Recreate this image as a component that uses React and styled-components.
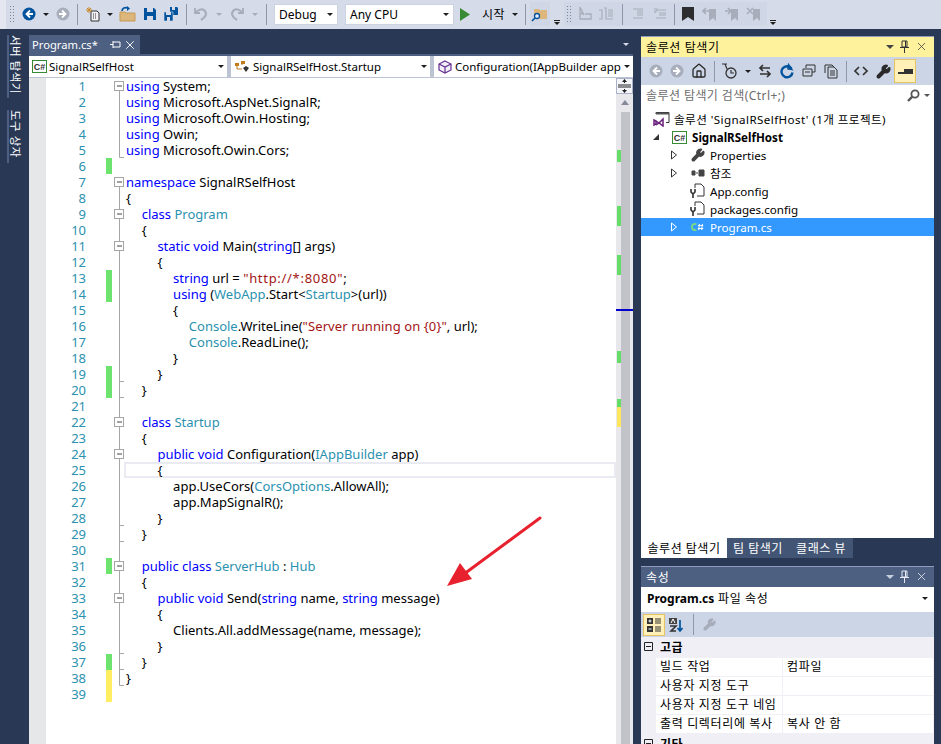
import React from 'react';
import styled, { createGlobalStyle } from 'styled-components';
import { Wrench, Home, X } from 'lucide-react';

const GlobalStyle = createGlobalStyle`
    html, body {
        margin: 0;
        padding: 0;
        background: #293955;
    }
    * {
        box-sizing: border-box;
    }
`;

const FONT = `"Noto Sans", "Noto Sans CJK KR", sans-serif`;

const Root = styled.div`
    width: 941px;
    height: 744px;
    overflow: hidden;
    position: relative;
    display: flex;
    flex-direction: column;
    background: #293955;
    font-family: ${FONT};
    font-size: 12px;
    color: #000;
`;

/* top toolbar */
const Toolbar = styled.div`
    height: 29px;
    flex: none;
    display: flex;
    align-items: center;
    padding: 0 0 1px 3px;
    background: #d6dbe9;
    border-left: 6px solid #e4e7f0;
`;

const Grip = styled.div`
    width: 5px;
    height: 19px;
    margin-left: ${p => p.$ml || 0}px;
    margin-right: ${p => p.$mr || 5}px;
    background-image: radial-gradient(#7d8699 0.6px, transparent 0.8px);
    background-size: 3px 3px;
`;

const Tool = styled.div`
    width: ${p => p.$w || 20}px;
    height: 22px;
    flex: none;
    display: flex;
    align-items: center;
    justify-content: center;
    color: ${p => p.$color || '#1e1e1e'};
`;

const Sep = styled.div`
    width: ${p => p.$w || 9}px;
    height: 21px;
    flex: none;
    display: flex;
    justify-content: center;

    &::before {
        content: '';
        width: 1px;
        background: #8f97a8;
    }
`;

const Spacer = styled.div`
    width: ${p => p.$w}px;
    flex: none;
`;

const Caret = styled.span`
    width: 0;
    height: 0;
    border-left: ${p => p.$size || 3}px solid transparent;
    border-right: ${p => p.$size || 3}px solid transparent;
    border-top: ${p => p.$size || 3}px solid ${p => p.$color || '#1e1e1e'};
`;

const ToolSelect = styled.div`
    width: ${p => p.$w}px;
    height: 21px;
    flex: none;
    margin-right: ${p => p.$mr || 0}px;
    display: flex;
    align-items: center;
    justify-content: space-between;
    padding: 0 4px;
    background: #fff;
    border: 1px solid #cdd3e0;
    font-size: 12px;
`;

const RunLabel = styled.span`
    width: 36px;
    flex: none;
    padding-left: 9px;
    font-size: 12px;
    letter-spacing: 0.4px;
`;

const ToolGroup = styled.div`
    display: flex;
    align-items: center;
    height: 24px;
    flex: none;
    background: #cfd6e5;
`;

const Overflow = styled.div`
    width: ${p => p.$w || 12}px;
    height: 24px;
    flex: none;
    display: flex;
    flex-direction: column;
    justify-content: flex-end;
    align-items: center;
    gap: 1px;
    padding-bottom: 1px;

    &::before {
        content: '';
        width: 6px;
        height: 1px;
        background: #1e1e1e;
    }

    &::after {
        content: '';
        border-left: 3px solid transparent;
        border-right: 3px solid transparent;
        border-top: 3px solid #1e1e1e;
    }
`;

const Main = styled.div`
    flex: 1;
    min-height: 0;
    display: flex;
`;

/* left vertical tabs */
const SideStrip = styled.div`
    width: 29px;
    flex: none;
    display: flex;
    flex-direction: column;
    align-items: flex-start;
    gap: 12px;
    padding: 6px 0 0 9px;
`;

const SideTab = styled.div`
    writing-mode: vertical-rl;
    text-orientation: sideways;
    width: 12px;
    height: ${p => p.$h}px;
    display: flex;
    align-items: center;
    color: #fff;
    font-size: 11.5px;
    line-height: 12px;
    letter-spacing: 0.5px;
    white-space: nowrap;
    box-shadow: -2px 0 0 #4d6082;
`;

/* document well */
const DocWell = styled.div`
    width: 604px;
    flex: none;
    display: flex;
    flex-direction: column;
`;

const DocTabs = styled.div`
    height: 27px;
    flex: none;
    padding-top: 6px;
    display: flex;
    justify-content: space-between;
    border-bottom: 2px solid #4d6082;
`;

const DocTab = styled.div`
    width: 111px;
    height: 19px;
    display: flex;
    align-items: center;
    padding-left: 3px;
    background: #4d6082;
    color: #fff;
    font-size: 11.2px;
`;

const DocTabName = styled.span`
    width: 76px;
    flex: none;
`;

const WellCaret = styled.div`
    padding: 8px 4px 0 0;
    display: flex;
`;

const NavBar = styled.div`
    height: 22px;
    flex: none;
    display: flex;
    gap: 4px;
    padding-bottom: 1px;
    background: #bcc4d4;
`;

const NavCombo = styled.div`
    width: ${p => p.$w}px;
    flex: ${p => (p.$grow ? 1 : 'none')};
    display: flex;
    align-items: center;
    gap: 2px;
    padding: 0 3px;
    background: #fff;
    font-size: 11.5px;
    white-space: nowrap;
    overflow: hidden;
`;

const NavText = styled.span`
    flex: 1;
    overflow: hidden;
`;

const Editor = styled.div`
    flex: 1;
    min-height: 0;
    display: flex;
    background: #fff;
`;

const Gutter = styled.div`
    width: 17px;
    flex: none;
    background: #e6e7e8;
`;

const Lines = styled.div`
    flex: 1;
    min-width: 0;
`;

const Row = styled.div`
    height: 16px;
    display: flex;
    font-size: 13px;
    line-height: 16px;
    white-space: pre;
`;

const LineNo = styled.div`
    width: 40px;
    flex: none;
    text-align: right;
    color: #2b91af;
`;

const ChangeBar = styled.div`
    width: 6px;
    flex: none;
    margin-left: 20px;
    background: ${p => ({ saved: '#6fe36f', dirty: '#ffee62' }[p.$state] || 'transparent')};
`;

const FoldCell = styled.svg`
    width: 12px;
    height: 16px;
    flex: none;
    display: block;
`;

const Code = styled.div`
    flex: 1;
    min-width: 0;
    padding-left: ${p => 2 + p.$indent * 15.7}px;
    box-shadow: ${p => (p.$current ? 'inset 0 0 0 2px #eaeaf2' : 'none')};
    color: #000;
`;

const Kw = styled.span`
    color: #0000ff;
`;

const TypeName = styled.span`
    color: #2b91af;
`;

const Str = styled.span`
    color: #a31515;
    letter-spacing: ${p => p.$ls || 0}px;
`;

/* vertical scrollbar with markers */
const ScrollBar = styled.div`
    width: 17px;
    flex: none;
    position: relative;
    background: #e8e8ec;
    display: flex;
    flex-direction: column;
    align-items: center;
`;

const SplitBtn = styled.div`
    width: 17px;
    height: 16px;
    flex: none;
    display: flex;
    align-items: center;
    justify-content: center;
    background: #f3f5fb;
    border: 1px solid #a9b2c6;
`;

const ScrollUp = styled.div`
    height: 18px;
    flex: none;
    padding-top: 6px;

    &::before {
        content: '';
        display: block;
        border-left: 4.5px solid transparent;
        border-right: 4.5px solid transparent;
        border-bottom: 5px solid #868999;
    }
`;

const ScrollThumb = styled.div`
    width: 9px;
    flex: 1;
    margin-left: 1px;
    background: #c2c3c9;
`;

const Mark = styled.div`
    position: absolute;
    left: 1px;
    width: 4px;
    background: ${p => (p.$dirty ? '#ffe65c' : '#66dd66')};
    top: ${p => p.$top}px;
    height: ${p => p.$h}px;
`;

const CaretMark = styled.div`
    position: absolute;
    left: 0;
    right: 0;
    top: 231px;
    height: 2px;
    background: #0000cd;
`;

/* right column */
const RightCol = styled.div`
    width: 293px;
    flex: none;
    margin-left: 8px;
    padding-top: 7px;
    display: flex;
    flex-direction: column;
`;

const ToolWindowTitle = styled.div`
    height: 21px;
    flex: none;
    display: flex;
    align-items: center;
    justify-content: space-between;
    padding: 0 6px 0 5px;
    background: ${p => (p.$active ? '#fff29d' : '#4d6082')};
    color: ${p => (p.$active ? '#000' : '#fff')};
    box-shadow: inset 0 1px 0 #8e9bbc;
    font-size: 12px;
    letter-spacing: 0.6px;
`;

const TitleBtns = styled.div`
    display: flex;
    align-items: center;
    gap: 6px;
`;

const PanelBar = styled.div`
    height: ${p => p.$h}px;
    flex: none;
    display: flex;
    align-items: center;
    padding-left: ${p => p.$pl || 0}px;
    background: #ccd5e6;
`;

const PanelTool = styled.div`
    width: ${p => p.$w || 22}px;
    height: ${p => p.$h || 22}px;
    flex: none;
    display: flex;
    align-items: center;
    justify-content: center;
    background: ${p => (p.$on ? '#fff0b8' : 'transparent')};
    border: ${p => (p.$on ? '1px solid #e5c365' : 'none')};
    color: #2a2a2a;
`;

const SearchBox = styled.div`
    height: 20px;
    flex: none;
    display: flex;
    align-items: center;
    justify-content: space-between;
    padding: 0 4px 0 5px;
    background: #fff;
    color: #6d6d6d;
    font-size: 12px;
    letter-spacing: 0.42px;
`;

const SearchIcons = styled.div`
    display: flex;
    align-items: center;
    gap: 4px;
    color: #555;
`;

const Tree = styled.div`
    height: 433px;
    flex: none;
    padding-top: 5px;
    background: #fff;
`;

const TreeRow = styled.div`
    height: 18px;
    display: flex;
    align-items: center;
    padding-left: ${p => p.$pl}px;
    background: ${p => (p.$selected ? '#3399ff' : 'transparent')};
    color: ${p => (p.$selected ? '#fff' : '#000')};
    font-size: 11.6px;
    font-weight: ${p => (p.$bold ? 700 : 400)};
    letter-spacing: ${p => p.$ls || 0}px;
    white-space: nowrap;
`;

const Expander = styled.div`
    width: ${p => p.$w || 18}px;
    flex: none;
    display: flex;
    align-items: center;
`;

const TreeIcon = styled.div`
    width: 19px;
    flex: none;
    margin-right: ${p => p.$mr || 0}px;
    display: flex;
    align-items: center;
    justify-content: center;
`;

const ToolTabs = styled.div`
    height: 21px;
    flex: none;
    display: flex;
`;

const ToolTab = styled.div`
    width: ${p => p.$w}px;
    height: 20px;
    display: flex;
    align-items: center;
    justify-content: center;
    background: ${p => (p.$active ? '#fff' : '#435575')};
    color: ${p => (p.$active ? '#000' : '#fff')};
    font-size: 12px;
    letter-spacing: 0.5px;
`;

const Gap = styled.div`
    height: 7px;
    flex: none;
`;

const PropHeader = styled.div`
    height: 25px;
    flex: none;
    display: flex;
    align-items: center;
    justify-content: space-between;
    padding: 0 6px 3px;
    background: #fff;
    font-size: 12px;
    letter-spacing: 0.6px;
`;

const BoldName = styled.b`
    font-weight: 700;
    letter-spacing: 0;
`;

const PropGrid = styled.div`
    flex: 1;
    min-height: 0;
    background: #f0eff5;
    overflow: hidden;
`;

const Category = styled.div`
    height: 21px;
    display: flex;
    align-items: center;
    gap: 7px;
    padding: 0 0 2px 3px;
    font-size: 12px;
    font-weight: 700;
    letter-spacing: 0.4px;
`;

const PropRow = styled.div`
    height: 19px;
    display: grid;
    grid-template-columns: 126px 150px;
    gap: 1px;
    margin-left: 15px;
    padding-bottom: 1px;
    background: #f0eff5;
`;

const PropCell = styled.div`
    background: #fff;
    padding-left: 4px;
    font-size: 12px;
    line-height: 18px;
    letter-spacing: 0.65px;
    white-space: nowrap;
    overflow: hidden;
`;

/* annotation drawn on top of the screenshot */
const ArrowOverlay = styled.svg`
    position: absolute;
    left: 440px;
    top: 510px;
`;

/* drawn icons */
const Svg = ({ w = 16, h = 16, children }) => (
    <svg width={w} height={h} viewBox={`0 0 ${w} ${h}`} fill="none">{children}</svg>
);

const CircleArrow = ({ color, dir = 'left' }) => (
    <Svg>
        <circle cx="8" cy="8" r="6.5" fill={color} />
        <path
            d={dir === 'left' ? 'M9 4.5 5.5 8 9 11.5M5.5 8H12' : 'M7 4.5 10.5 8 7 11.5M10.5 8H4'}
            stroke="#fff"
            strokeWidth="1.8"
        />
    </Svg>
);

const NewProjectIcon = () => (
    <Svg>
        <path d="M6 5h6l2 2v8H6z" fill="#f2f2f6" stroke="#333" />
        <path d="M8 8h4M8 10h4M8 12h4" stroke="#333" strokeDasharray="1 1" />
        <path d="M4 1v6M1 4h6M2 2l4 4M6 2 2 6" stroke="#c98a2b" strokeWidth="1" />
    </Svg>
);

const OpenIcon = () => (
    <Svg w={18}>
        <path d="M1 6h5l1 1h9v8H1z" fill="#dcb67a" stroke="#c79a55" />
        <path d="M3 5c0-3 3-4 6-3" stroke="#00539c" strokeWidth="1.6" />
        <path d="M8 0v5l3-2.5z" fill="#00539c" />
    </Svg>
);

const SaveIcon = () => (
    <Svg>
        <path d="M2 2h10l2 2v10H2z" fill="#00539c" />
        <path d="M5 2h6v4H5z" fill="#d6dbe9" />
        <path d="M5 10h6v4H5z" fill="#d6dbe9" />
    </Svg>
);

const SaveAllIcon = () => (
    <Svg>
        <path d="M7 1h7l1 1v7H7z" fill="#00539c" />
        <path d="M9 1h3v3H9z" fill="#d6dbe9" />
        <path d="M1 6h9v9H1z" fill="#00539c" stroke="#d6dbe9" strokeWidth="0.6" />
        <path d="M3 6h5v3H3zM4 11h3v4H4z" fill="#d6dbe9" />
    </Svg>
);

const UndoIcon = ({ flip }) => (
    <svg width="16" height="16" viewBox="0 0 16 16" fill="none" style={flip ? { transform: 'scaleX(-1)' } : undefined}>
        <path d="M2 2v5h5" stroke="#a7adba" strokeWidth="1.8" />
        <path d="M3 6.5C5 3 10 2.5 12 5s1 6-4 9" stroke="#a7adba" strokeWidth="2.2" />
    </svg>
);

const FindFolderIcon = () => (
    <Svg w={18}>
        <path d="M3 3h5l1 1h7v9H3z" fill="#dcb67a" />
        <circle cx="6" cy="10" r="2.5" fill="#e6ecf8" stroke="#00539c" strokeWidth="1.3" />
        <path d="M4 12 1 15" stroke="#00539c" strokeWidth="1.6" />
    </Svg>
);

const GreyLinesIcon = ({ kind }) => (
    <Svg>
        {kind === 'a' && <path d="M3 1v8l2-2 2 2zM3 8v5h11V8H8" fill="none" stroke="#a7adba" strokeWidth="1.3" />}
        {kind === 'b' && <path d="M1 4h3v9H1M6 2h2v11h7M10 4h5M10 6h5M10 8h5M10 10h5" stroke="#a7adba" strokeWidth="1.2" />}
        {kind === 'c' && <path d="M3 3h10M7 5h6M7 7h6M7 9h6M3 12h10" stroke="#a7adba" strokeWidth="1.1" />}
        {kind === 'd' && <path d="M2 3h3v2H3v2M6 4h8M7 7h7M7 9h7M4 12h10" stroke="#a7adba" strokeWidth="1.2" />}
    </Svg>
);

const BookmarkIcon = ({ color = '#2d2d30', mark }) => (
    <Svg>
        <path d={mark ? 'M7 3h7v12l-3-3-4 3z' : 'M2 1h12v14l-6-4-6 4z'} fill={color} />
        {mark === 'prev' && <path d="M1 5h6M4 2 1 5l3 3" stroke={color} strokeWidth="1.6" />}
        {mark === 'next' && <path d="M1 5h6M4 2l3 3-3 3" stroke={color} strokeWidth="1.6" />}
        {mark === 'clear' && <path d="m1 2 6 6M7 2 1 8" stroke={color} strokeWidth="1.6" />}
    </Svg>
);

const CsProjectIcon = () => (
    <svg width="15" height="13" viewBox="0 0 15 13" fill="none">
        <rect x="0.5" y="0.5" width="14" height="12" fill="#fff" stroke="#388a34" />
        <text x="7.5" y="10" textAnchor="middle" fontFamily="Liberation Sans" fontWeight="700" fontSize="9" fill="#333">C#</text>
    </svg>
);

const ClassNavIcon = () => (
    <Svg w={17}>
        <path d="M1 4h4v3H1zM7 2h4v3H7z" fill="#c27d1a" />
        <path d="M3 7v3h5M8 4v2" stroke="#c27d1a" />
        <path d="m9 9 3-2 3 2-3 4z" fill="#333" />
    </Svg>
);

const MethodNavIcon = () => (
    <Svg>
        <path d="M8 2 14 5v6l-6 3-6-3V5z" fill="#f0eff8" stroke="#652d90" strokeWidth="1.2" />
        <path d="m2 5 6 3 6-3M8 8v6" stroke="#652d90" strokeWidth="1.2" />
    </Svg>
);

const SolutionIcon = () => (
    <svg width="17" height="16" viewBox="0 0 17 16" fill="none">
        <path d="M3 3V1.5h13v10h-3" stroke="#333" />
        <path d="M3 1.5h13v2H3z" fill="#555" />
        <path d="M1 9v5l2-1V10zM3 10l3 2 4-4v7l-4-3-3 2" fill="none" stroke="#68217a" strokeWidth="1.5" />
    </svg>
);

const ConfigIcon = () => (
    <svg width="15" height="16" viewBox="0 0 15 16" fill="none">
        <path d="M5 5V1h6l3 3v9H7" stroke="#333" fill="#fff" />
        <path d="M1 6v3l2 2 2-2V6M3 11v4" stroke="#333" strokeWidth="1.6" />
    </svg>
);

const RefsIcon = () => (
    <svg width="14" height="8" viewBox="0 0 14 8" fill="none">
        <path d="M1 2h3v4H1zM8 1h5v6H8zM5 4h2" fill="#444" stroke="#444" />
    </svg>
);

const CsFileIcon = () => (
    <svg width="13" height="10" viewBox="0 0 17 12" fill="none">
        <path d="M7 2.5A4 4 0 1 0 7 9.5" stroke="#7ddc7d" strokeWidth="2.4" />
        <path d="M9 4h7M9 8h7M11 2l-1 8M15 2l-1 8" stroke="#fff" strokeWidth="1.3" />
    </svg>
);

const Triangle = ({ open, color = '#333' }) => (
    <svg width="8" height="10" viewBox="0 0 8 10">
        {open
            ? <path d="M7 2v6H1z" fill={color} />
            : <path d="M1.5 1 6.5 5 1.5 9z" fill="none" stroke={color} strokeWidth="1" />}
    </svg>
);

const Pin = ({ color }) => (
    <svg width="9" height="13" viewBox="0 0 9 13" fill="none">
        <path d="M2 1h5v6H2zM0 7.5h9M4.5 8v5M5.5 1v6" stroke={color} />
    </svg>
);

const TabPin = () => (
    <svg width="11" height="9" viewBox="0 0 11 9" fill="none">
        <path d="M3 1v7M3 4.5H0M3 2h7v5H3" stroke="#fff" />
    </svg>
);

const HistoryIcon = () => (
    <Svg w={18}>
        <circle cx="10" cy="10" r="5" stroke="#333" strokeWidth="1.3" />
        <path d="M10 7v3h3M1 1h5M4 1l2 5" stroke="#333" strokeWidth="1.2" />
    </Svg>
);

const SyncIcon = () => (
    <Svg>
        <path d="M13 5H3M6 2 3 5l3 3M3 11h10M10 8l3 3-3 3" stroke="#333" strokeWidth="1.7" />
    </Svg>
);

const RefreshIcon = () => (
    <Svg>
        <path d="M12.5 5.5a5.5 5.5 0 1 0 1 4" stroke="#00539c" strokeWidth="2.4" />
        <path d="M8.5 0v7H15z" fill="#00539c" transform="rotate(8 11 4)" />
    </Svg>
);

const CollapseIcon = () => (
    <Svg>
        <path d="M5 5V2h9v7h-3" stroke="#333" />
        <path d="M2 6h9v7H2zM4 9h5" stroke="#333" />
    </Svg>
);

const ShowAllIcon = () => (
    <Svg>
        <path d="M2 10V2h7l2 2M5 12V4h6l3 3v8H5zM7 8h5M7 10h5M7 12h5" stroke="#333" />
    </Svg>
);

const CodeIcon = () => (
    <Svg>
        <path d="M6 4 2 8l4 4M10 4l4 4-4 4" stroke="#333" strokeWidth="1.7" />
    </Svg>
);

const PreviewIcon = () => (
    <svg width="15" height="5" viewBox="0 0 15 5">
        <path d="M6 0h9v5H0V3h6z" fill="#333" />
    </svg>
);

const SearchGlass = () => (
    <svg width="13" height="13" viewBox="0 0 13 13" fill="none">
        <circle cx="8" cy="5" r="3.6" stroke="#555" strokeWidth="1.8" />
        <path d="M5.3 7.7 1 12" stroke="#555" strokeWidth="2.4" />
    </svg>
);

const CategorizedIcon = () => (
    <Svg>
        <path d="M1 1h6v6H1zM1 9h6v6H1z" fill="#333" />
        <path d="M2.5 4h3M4 2.5v3M2.5 12h3" stroke="#fff" />
        <path d="M9 2h6M9 4h6M9 6h6M9 10h6M9 12h6M9 14h6" stroke="#333" />
    </Svg>
);

const SortIcon = () => (
    <Svg>
        <path d="M1 1h8v6H1z" fill="#444" />
        <path d="M3 6l2-4 2 4" stroke="#fff" />
        <path d="M2 9h6L3 14h5" stroke="#333" strokeWidth="1.6" />
        <path d="M12 3v11M9.5 11l2.5 3 2.5-3" stroke="#00539c" strokeWidth="1.7" />
    </Svg>
);

const SplitIcon = () => (
    <svg width="13" height="14" viewBox="0 0 13 14" fill="none">
        <path d="M0 6h13M0 8h13" stroke="#222" />
        <path d="M6.5 1v3M6.5 10v3" stroke="#222" />
        <path d="M4 3l2.5-3L9 3zM4 11l2.5 3L9 11z" fill="#222" />
    </svg>
);

const CategoryBox = () => (
    <svg width="9" height="9" viewBox="0 0 9 9" fill="none">
        <path d="M.5.5h8v8h-8zM2 4.5h5" stroke="#222" />
    </svg>
);

const FoldGlyph = ({ kind }) => (
    <FoldCell viewBox="0 0 12 16" fill="none">
        {(kind === 'line' || kind === 'inner') && <path d="M7.5 0v16" stroke="#a5a5a5" />}
        {kind === 'end' && <path d="M7.5 0v15.5H12" stroke="#a5a5a5" />}
        {kind === 'tick' && <path d="M7.5 0v16M7.5 15.5H12" stroke="#a5a5a5" />}
        {kind === 'box' && <path d="M7.5 12v4" stroke="#a5a5a5" />}
        {(kind === 'box' || kind === 'inner') && (
            <g>
                <rect x="2.5" y="3.5" width="9" height="9" fill="#fff" stroke="#a5a5a5" />
                <path d="M5 8h5" stroke="#444" />
            </g>
        )}
    </FoldCell>
);

const k = text => <Kw>{text}</Kw>;
const t = text => <TypeName>{text}</TypeName>;
const s = (text, ls) => <Str $ls={ls}>{text}</Str>;

// [indent, fold kind, change state, code parts]
const CODE = [
    [0, 'box', '', [k('using'), ' System;']],
    [0, 'line', '', [k('using'), ' Microsoft.AspNet.SignalR;']],
    [0, 'line', '', [k('using'), ' Microsoft.Owin.Hosting;']],
    [0, 'line', '', [k('using'), ' Owin;']],
    [0, 'end', '', [k('using'), ' Microsoft.Owin.Cors;']],
    [0, '', 'saved', ['']],
    [0, 'box', '', [k('namespace'), ' SignalRSelfHost']],
    [0, 'line', '', ['{']],
    [1, 'inner', '', [k('class'), ' ', t('Program')]],
    [1, 'line', '', ['{']],
    [2, 'inner', '', [k('static'), ' ', k('void'), ' Main(', k('string'), '[] args)']],
    [2, 'line', '', ['{']],
    [3, 'line', 'saved', [k('string'), ' url = ', s('"http://*:8080"', 0.7), ';']],
    [3, 'line', 'saved', [k('using'), ' (', t('WebApp'), '.Start<', t('Startup'), '>(url))']],
    [3, 'line', '', ['{']],
    [4, 'line', '', [t('Console'), '.WriteLine(', s('"Server running on {0}"', 0.1), ', url);']],
    [4, 'line', '', [t('Console'), '.ReadLine();']],
    [3, 'line', '', ['}']],
    [2, 'tick', 'saved', ['}']],
    [1, 'tick', 'saved', ['}']],
    [0, 'line', '', ['']],
    [1, 'inner', '', [k('class'), ' ', t('Startup')]],
    [1, 'line', '', ['{']],
    [2, 'inner', '', [k('public'), ' ', k('void'), ' Configuration(', t('IAppBuilder'), ' app)']],
    [2, 'line', '', ['{']],
    [3, 'line', '', ['app.UseCors(', t('CorsOptions'), '.AllowAll);']],
    [3, 'line', '', ['app.MapSignalR();']],
    [2, 'tick', '', ['}']],
    [1, 'tick', '', ['}']],
    [0, 'line', '', ['']],
    [1, 'inner', 'saved', [k('public'), ' ', k('class'), ' ', t('ServerHub'), ' : ', t('Hub')]],
    [1, 'line', '', ['{']],
    [2, 'inner', '', [k('public'), ' ', k('void'), ' Send(', k('string'), ' name, ', k('string'), ' message)']],
    [2, 'line', '', ['{']],
    [3, 'line', '', ['Clients.All.addMessage(name, message);']],
    [2, 'tick', '', ['}']],
    [1, 'tick', 'saved', ['}']],
    [0, 'end', 'dirty', ['}']],
    [0, '', 'dirty', ['']],
];

const MARKS = [
    { top: 72, h: 12 },
    { top: 128, h: 20 },
    { top: 177, h: 20 },
    { top: 273, h: 12 },
    { top: 321, h: 8 },
    { top: 329, h: 20, dirty: true },
];

class App extends React.Component {
    renderToolbar() {
        return (
            <Toolbar>
                <Grip $mr={5} />
                <Tool><CircleArrow color="#00539c" /></Tool>
                <Tool $w={14}><Caret /></Tool>
                <Tool><CircleArrow color="#a7adba" dir="right" /></Tool>
                <Sep />
                <Spacer $w={1} />
                <Tool><NewProjectIcon /></Tool>
                <Tool $w={14}><Caret /></Tool>
                <Tool $w={22}><OpenIcon /></Tool>
                <Tool $w={21}><SaveIcon /></Tool>
                <Tool $w={22}><SaveAllIcon /></Tool>
                <Sep />
                <Tool><UndoIcon /></Tool>
                <Tool $w={15}><Caret $color="#a7adba" /></Tool>
                <Tool $w={21}><UndoIcon flip /></Tool>
                <Tool $w={15}><Caret $color="#a7adba" /></Tool>
                <Sep $w={9} />
                <Spacer $w={3} />
                <ToolSelect $w={64} $mr={7}>Debug<Caret /></ToolSelect>
                <ToolSelect $w={109} $mr={3}>Any CPU<Caret /></ToolSelect>
                <Tool $w={16}>
                    <svg width="10" height="13" viewBox="0 0 10 13"><path d="M0 0l10 6.5L0 13z" fill="#388a34" /></svg>
                </Tool>
                <RunLabel>시작</RunLabel>
                <Tool $w={12}><Caret /></Tool>
                <Sep $w={9} />
                <ToolGroup><Tool $w={20}><FindFolderIcon /></Tool></ToolGroup>
                <Overflow $w={14} />
                <ToolGroup>
                    <Grip $ml={2} $mr={4} />
                    <Tool $w={20}><GreyLinesIcon kind="a" /></Tool>
                    <Tool $w={22}><GreyLinesIcon kind="b" /></Tool>
                    <Sep $w={10} />
                    <Tool $w={22}><GreyLinesIcon kind="c" /></Tool>
                    <Tool $w={22}><GreyLinesIcon kind="d" /></Tool>
                    <Sep $w={6} />
                    <Tool $w={22}><BookmarkIcon /></Tool>
                    <Tool $w={22}><BookmarkIcon color="#a7adba" mark="prev" /></Tool>
                    <Tool $w={22}><BookmarkIcon color="#a7adba" mark="next" /></Tool>
                    <Tool $w={22}><BookmarkIcon color="#a7adba" mark="clear" /></Tool>
                    <Spacer $w={2} />
                </ToolGroup>
                <Overflow />
            </Toolbar>
        );
    }

    renderDocument() {
        return (
            <DocWell>
                <DocTabs>
                    <DocTab>
                        <DocTabName>Program.cs*</DocTabName>
                        <Tool $w={14} $color="#fff"><TabPin /></Tool>
                        <Tool $w={16} $color="#fff"><X size={14} strokeWidth={1.6} /></Tool>
                    </DocTab>
                    <WellCaret><Caret $color="#d6dbe9" /></WellCaret>
                </DocTabs>
                <NavBar>
                    <NavCombo $w={198}>
                        <CsProjectIcon />
                        <NavText>SignalRSelfHost</NavText>
                        <Caret />
                    </NavCombo>
                    <NavCombo $w={199}>
                        <ClassNavIcon />
                        <NavText>SignalRSelfHost.Startup</NavText>
                        <Caret />
                    </NavCombo>
                    <NavCombo $grow>
                        <MethodNavIcon />
                        <NavText>Configuration(IAppBuilder app</NavText>
                        <Caret />
                    </NavCombo>
                </NavBar>
                <Editor>
                    <Gutter />
                    <Lines>
                        {CODE.map(([indent, fold, state, parts], index) => (
                            <Row key={index}>
                                <LineNo>{index + 1}</LineNo>
                                <ChangeBar $state={state} />
                                <FoldGlyph kind={fold} />
                                <Code $indent={indent} $current={index === 24}>
                                    {parts.map((part, i) => <React.Fragment key={i}>{part}</React.Fragment>)}
                                </Code>
                            </Row>
                        ))}
                    </Lines>
                    <ScrollBar>
                        <SplitBtn><SplitIcon /></SplitBtn>
                        <ScrollUp />
                        <ScrollThumb />
                        {MARKS.map(mark => <Mark key={mark.top} $top={mark.top} $h={mark.h} $dirty={mark.dirty} />)}
                        <CaretMark />
                    </ScrollBar>
                </Editor>
            </DocWell>
        );
    }

    renderExplorer() {
        return (
            <>
                <ToolWindowTitle $active>
                    솔루션 탐색기
                    <TitleBtns>
                        <Caret $size={4} $color="#444" />
                        <Pin color="#333" />
                        <X size={13} strokeWidth={1.5} color="#444" />
                    </TitleBtns>
                </ToolWindowTitle>
                <PanelBar $h={28} $pl={4}>
                    <PanelTool $w={21}><CircleArrow color="#a7adba" /></PanelTool>
                    <PanelTool><CircleArrow color="#a7adba" dir="right" /></PanelTool>
                    <PanelTool><Home size={16} strokeWidth={2} /></PanelTool>
                    <Sep $w={8} />
                    <PanelTool $w={24}><HistoryIcon /></PanelTool>
                    <PanelTool $w={12}><Caret /></PanelTool>
                    <PanelTool><SyncIcon /></PanelTool>
                    <PanelTool><RefreshIcon /></PanelTool>
                    <PanelTool><CollapseIcon /></PanelTool>
                    <PanelTool><ShowAllIcon /></PanelTool>
                    <Sep $w={8} />
                    <PanelTool><CodeIcon /></PanelTool>
                    <PanelTool><Wrench size={15} strokeWidth={2.4} fill="#2a2a2a" /></PanelTool>
                    <PanelTool $on $h={24}><PreviewIcon /></PanelTool>
                </PanelBar>
                <SearchBox>
                    솔루션 탐색기 검색(Ctrl+;)
                    <SearchIcons>
                        <SearchGlass />
                        <Caret $color="#555" />
                    </SearchIcons>
                </SearchBox>
                <Tree>
                    <TreeRow $pl={11} $ls={0.42}>
                        <TreeIcon $mr={3}><SolutionIcon /></TreeIcon>
                        솔루션 'SignalRSelfHost' (1개 프로젝트)
                    </TreeRow>
                    <TreeRow $pl={11} $bold>
                        <Expander><Triangle open /></Expander>
                        <TreeIcon $mr={3}><CsProjectIcon /></TreeIcon>
                        SignalRSelfHost
                    </TreeRow>
                    <TreeRow $pl={29}>
                        <Expander><Triangle /></Expander>
                        <TreeIcon $mr={3}><Wrench size={14} strokeWidth={2.4} color="#444" fill="#444" /></TreeIcon>
                        Properties
                    </TreeRow>
                    <TreeRow $pl={29}>
                        <Expander><Triangle /></Expander>
                        <TreeIcon $mr={3}><RefsIcon /></TreeIcon>
                        참조
                    </TreeRow>
                    <TreeRow $pl={47}>
                        <TreeIcon $mr={3}><ConfigIcon /></TreeIcon>
                        App.config
                    </TreeRow>
                    <TreeRow $pl={47}>
                        <TreeIcon $mr={3}><ConfigIcon /></TreeIcon>
                        packages.config
                    </TreeRow>
                    <TreeRow $pl={29} $selected>
                        <Expander><Triangle color="#fff" /></Expander>
                        <TreeIcon $mr={3}><CsFileIcon /></TreeIcon>
                        Program.cs
                    </TreeRow>
                </Tree>
                <ToolTabs>
                    <ToolTab $w={86} $active>솔루션 탐색기</ToolTab>
                    <ToolTab $w={62}>팀 탐색기</ToolTab>
                    <ToolTab $w={64}>클래스 뷰</ToolTab>
                </ToolTabs>
            </>
        );
    }

    renderProperties() {
        return (
            <>
                <ToolWindowTitle>
                    속성
                    <TitleBtns>
                        <Caret $size={4} $color="#c8d0e0" />
                        <Pin color="#e6e9f2" />
                        <X size={13} strokeWidth={1.5} color="#e6e9f2" />
                    </TitleBtns>
                </ToolWindowTitle>
                <PropHeader>
                    <span><BoldName>Program.cs</BoldName> 파일 속성</span>
                    <Caret />
                </PropHeader>
                <PanelBar $h={25} $pl={2}>
                    <PanelTool $on $w={22}><CategorizedIcon /></PanelTool>
                    <PanelTool $w={21}><SortIcon /></PanelTool>
                    <Sep $w={14} />
                    <PanelTool $w={18}><Wrench size={13} strokeWidth={2.4} color="#a7adba" fill="#a7adba" /></PanelTool>
                </PanelBar>
                <PropGrid>
                    <Category><CategoryBox />고급</Category>
                    <PropRow><PropCell>빌드 작업</PropCell><PropCell>컴파일</PropCell></PropRow>
                    <PropRow><PropCell>사용자 지정 도구</PropCell><PropCell /></PropRow>
                    <PropRow><PropCell>사용자 지정 도구 네임</PropCell><PropCell /></PropRow>
                    <PropRow><PropCell>출력 디렉터리에 복사</PropCell><PropCell>복사 안 함</PropCell></PropRow>
                    <Category><CategoryBox />기타</Category>
                </PropGrid>
            </>
        );
    }

    render() {
        return (
            <Root>
                <GlobalStyle />
                {this.renderToolbar()}
                <Main>
                    <SideStrip>
                        <SideTab $h={63}>서버 탐색기</SideTab>
                        <SideTab $h={53}>도구 상자</SideTab>
                    </SideStrip>
                    {this.renderDocument()}
                    <RightCol>
                        {this.renderExplorer()}
                        <Gap />
                        {this.renderProperties()}
                    </RightCol>
                </Main>
                <ArrowOverlay width="110" height="85" viewBox="0 0 110 85">
                    <path d="M100 8 20 67" stroke="#e8212e" strokeWidth="3" strokeLinecap="round" />
                    <path d="M7 76 32 69 20 53z" fill="#e8212e" />
                </ArrowOverlay>
            </Root>
        );
    }
}

export default App;
